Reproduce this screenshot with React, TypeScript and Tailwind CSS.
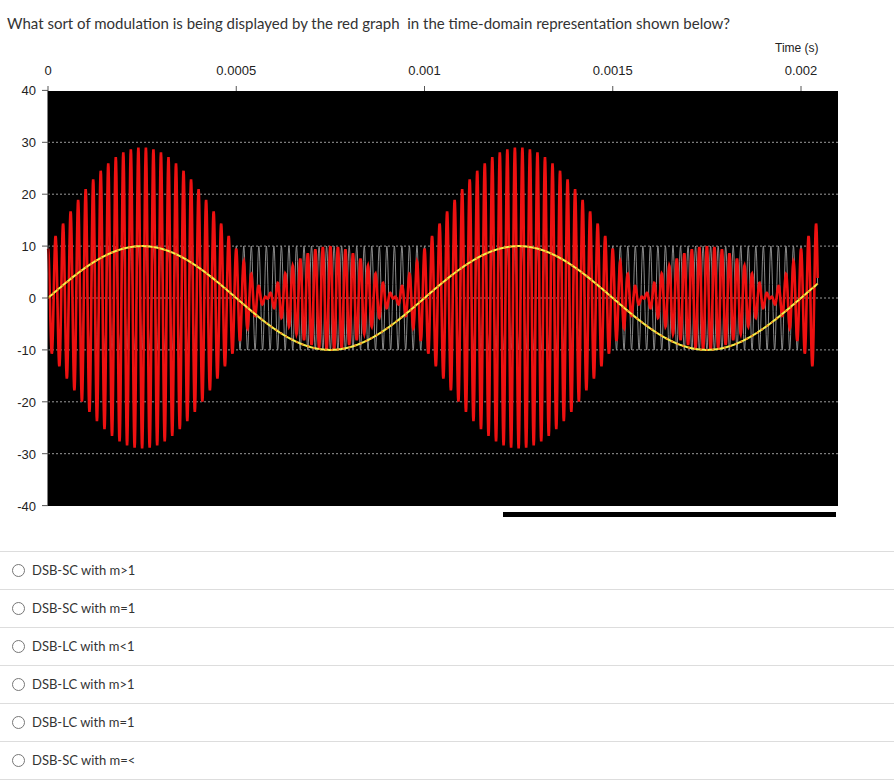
const X0 = 48
const PX = 376500 // px per second
const Y0 = 298
const PY = 5.19

function px(t: number) {
  return X0 + t * PX
}
function py(v: number) {
  return Y0 - v * PY
}

function build(f: (t: number) => number) {
  const pts: string[] = []
  const end = 0.002045
  const step = 1 / (50000 * 24)
  for (let t = 0; t <= end; t += step) pts.push(`${px(t).toFixed(2)},${py(f(t)).toFixed(2)}`)
  return pts.join(' ')
}

const wc = 2 * Math.PI * 50000
const wm = 2 * Math.PI * 1000
const red = build((t) => (9.5 + 19.5 * Math.sin(wm * t)) * Math.cos(wc * t))
const gray = build((t) => 10 * Math.cos(wc * t))
const yellow = build((t) => 10 * Math.sin(wm * t))

const options = [
  'DSB-SC with m>1',
  'DSB-SC with m=1',
  'DSB-LC with m<1',
  'DSB-LC with m>1',
  'DSB-LC with m=1',
  'DSB-SC with m=<',
]

function Chart() {
  const yTicks = [40, 30, 20, 10, 0, -10, -20, -30, -40]
  const xTicks = [
    ['0', 0],
    ['0.0005', 0.0005],
    ['0.001', 0.001],
    ['0.0015', 0.0015],
    ['0.002', 0.002],
  ] as const
  return (
    <svg width={894} height={490} viewBox="0 40 894 490" className="block" style={{ fontFamily: 'Arial, "Liberation Sans", sans-serif' }}>
      <text x={775} y={52} fontSize={12} fill="#222">Time (s)</text>
      <rect x={48} y={91} width={790} height={415} fill="#000" />
      {[30, 20, 10, 0, -10, -20, -30].map((v) => (
        <line key={v} x1={48} x2={838} y1={py(v)} y2={py(v)} stroke="#9a9a9a" strokeWidth={1} strokeDasharray="2 2" />
      ))}
      <polyline points={gray} fill="none" stroke="#8a8a8a" strokeWidth={1} />
      <polyline points={red} fill="none" stroke="#ee1111" strokeWidth={2.6} />
      <polyline points={yellow} fill="none" stroke="#f2f24a" strokeWidth={2} />
      <polyline points={yellow} fill="none" stroke="#f08a20" strokeWidth={2} strokeDasharray="2 4" />
      <line x1={48} x2={48} y1={91} y2={506} stroke="#000" />
      {yTicks.map((v) => (
        <g key={v}>
          <line x1={42} x2={48} y1={py(v)} y2={py(v)} stroke="#555" />
          <text x={36} y={py(v) + 5} fontSize={13} textAnchor="end" fill="#222">{v}</text>
        </g>
      ))}
      {xTicks.map(([l, t]) => (
        <g key={l}>
          <line x1={px(t)} x2={px(t)} y1={86} y2={91} stroke="#555" />
          <text x={px(t)} y={75} fontSize={13} textAnchor="middle" fill="#222">{l}</text>
        </g>
      ))}
      <rect x={503} y={512} width={333} height={5} fill="#000" />
    </svg>
  )
}

export default function App() {
  return (
    <div className="w-[894px] bg-white text-[#333]" style={{ fontFamily: 'Lato, "Open Sans", sans-serif' }}>
      <p className="pl-[7px] pt-[12px] text-[15px] leading-[22px]">
        What sort of modulation is being displayed by the red graph&nbsp; in the time-domain representation shown below?
      </p>
      <div className="mt-[6px]">
        <Chart />
      </div>
      <div className="mt-[21px] border-t border-[#ddd]">
        {options.map((o) => (
          <div key={o} className="flex h-[38px] items-center gap-[7px] border-b border-[#ddd] pl-[12px] text-[13px]">
            <span className="h-[13px] w-[13px] rounded-full border border-[#777] bg-white" />
            <span>{o}</span>
          </div>
        ))}
      </div>
    </div>
  )
}
